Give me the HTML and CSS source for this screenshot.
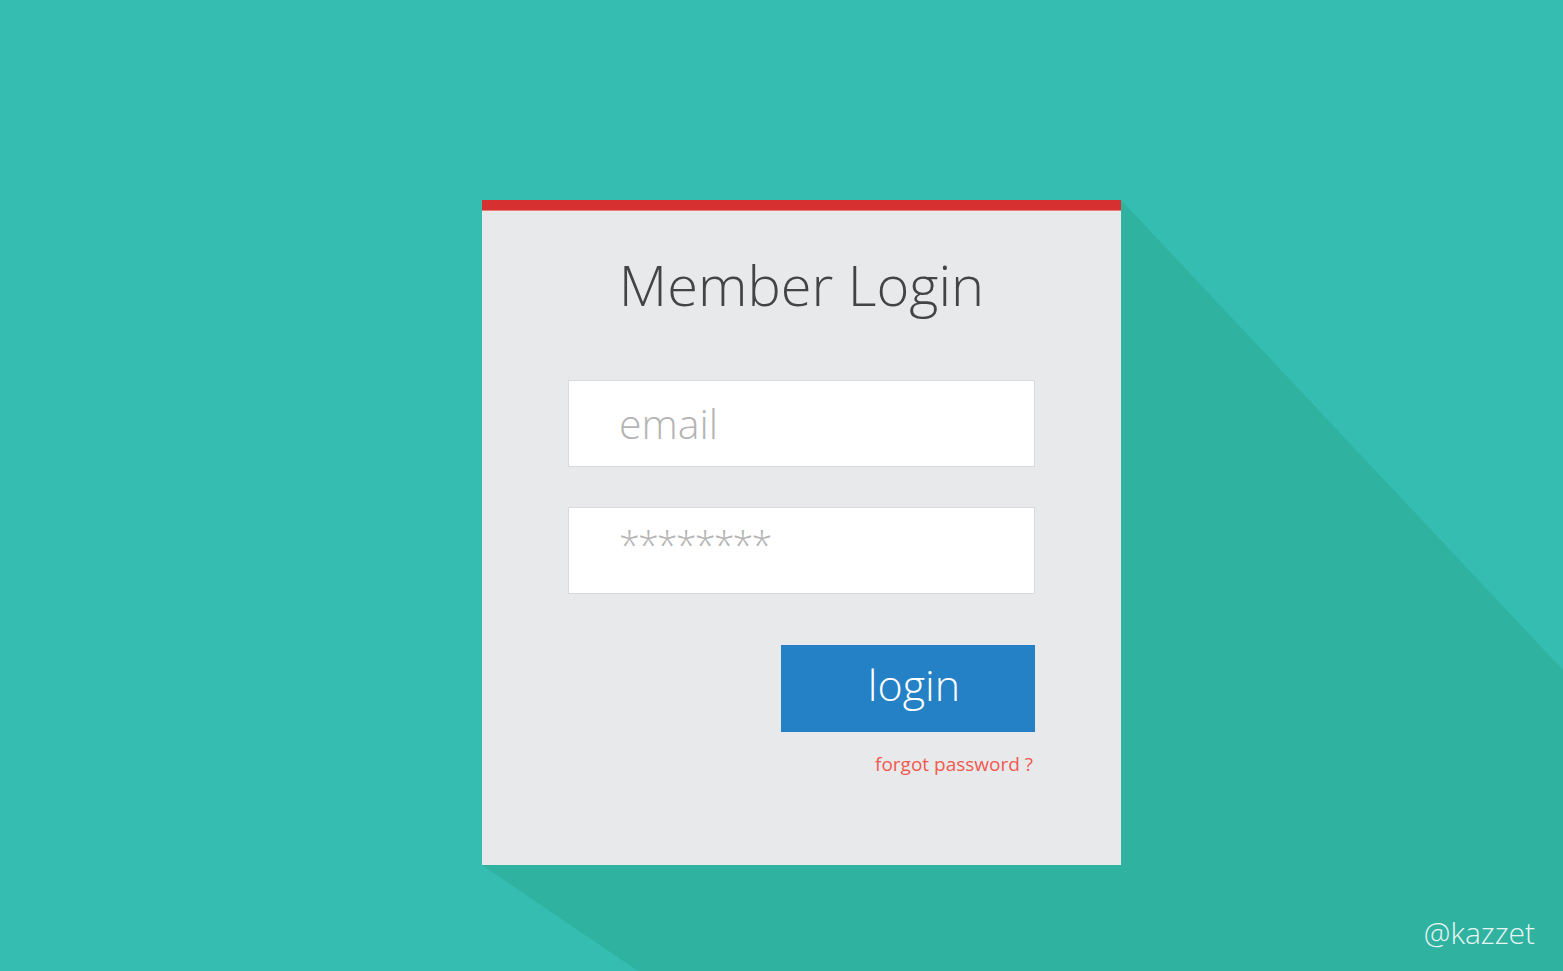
FILE: index.html
```html
<!DOCTYPE html>
<html lang="en">
<head>
    <meta charset="UTF-8">
    <meta name="viewport" content="width=device-width, initial-scale=1.0">
    <title>Member Login</title>
    <link rel="stylesheet" href="styles.css">
</head>
<body>

<svg class="long-shadow" width="1563" height="971" viewBox="0 0 1563 971">
    <polygon points="1121,200 1563,670 1563,971 638,971 482,865" fill="#30b2a1"/>
</svg>

<div class="page">
    <div class="card">
        <div class="card-top"></div>
        <div class="card-body">
            <h1>Member Login</h1>
            <form id="loginForm">
                <input type="email" class="field" placeholder="email">
                <input type="password" class="field field-pass" placeholder="********">
                <div class="actions">
                    <button type="submit">login</button>
                    <a href="">forgot password ?</a>
                </div>
            </form>
        </div>
    </div>
</div>

<div class="credit">@kazzet</div>

</body>
</html>
```

FILE: styles.css
```css
* {
    box-sizing: border-box;
}
body {
    font-family: "Open Sans", "Noto Sans", sans-serif;
    margin: 0;
    padding: 0;
    background-color: #36bdb2;
    width: 1563px;
    height: 971px;
    overflow: hidden;
    position: relative;
}
.long-shadow {
    position: absolute;
    top: 0;
    left: 0;
}
.page {
    position: relative;
    padding: 200px 0 0 482px;
}
.card {
    width: 639px;
    height: 665px;
    background-color: #e8e9eb;
}
.card-top {
    height: 11px;
    background-color: #d63031;
    border-bottom: 1px solid #eb7c7a;
}
.card-body {
    padding: 33px 86px 0 86px;
    display: flex;
    flex-direction: column;
    align-items: center;
}
.card-body h1 {
    margin: 0;
    font-weight: 300;
    font-size: 56px;
    line-height: 80px;
    color: #444;
}
.card-body form {
    width: 100%;
    margin-top: 56px;
    display: flex;
    flex-direction: column;
    gap: 40px;
}
.field {
    height: 87px;
    border: 1px solid #d9d9db;
    background: #fff;
    padding: 0 0 2px 50px;
    font-family: inherit;
    font-weight: 300;
    font-size: 41px;
    color: #555;
    outline: none;
}
.field::placeholder {
    color: #b4b4b4;
}
.field-pass {
    font-size: 38px;
    padding-bottom: 14px;
}
.field-pass::placeholder {
    letter-spacing: -2px;
}
.actions {
    margin-top: 11px;
    display: flex;
    flex-direction: column;
    align-items: flex-end;
}
.actions button {
    width: 254px;
    height: 87px;
    border: none;
    background-color: #2581c5;
    color: #fff;
    font-family: inherit;
    font-weight: 300;
    font-size: 43px;
    padding: 0 0 8px 12px;
    cursor: pointer;
}
.actions a {
    margin-top: 19px;
    margin-right: 2px;
    color: #f15a4f;
    font-size: 19px;
    text-decoration: none;
}
.credit {
    position: absolute;
    right: 28px;
    bottom: 18px;
    color: #e9f5f3;
    font-size: 30px;
    font-weight: 300;
}
```
